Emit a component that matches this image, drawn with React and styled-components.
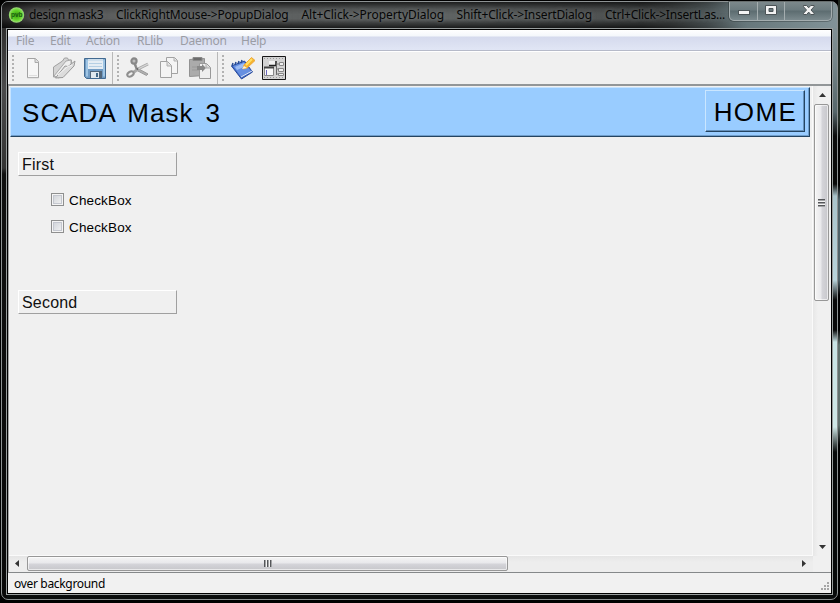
import React from "react";
import styled, { createGlobalStyle } from "styled-components";

const Global = createGlobalStyle`
  * { box-sizing: border-box; }
  body { margin: 0; background: #000; overflow: hidden; }
`;

const Desktop = styled.div`
  width: 840px;
  height: 603px;
  padding: 1px 2px 3px 1px;
  background: linear-gradient(180deg, #20271f 0 20px, #263028 120px, #000 140px 185px, #50646a 200px 280px, #000 295px 330px, #61736f 345px 425px, #000 445px) right 0 top 0 / 2px 100% no-repeat, #000;
  font-family: "Noto Sans", "Open Sans", sans-serif;
`;

const Frame = styled.div`
  display: flex;
  flex-direction: column;
  width: 837px;
  height: 599px;
  padding: 0 4px 4px;
  border: 1px solid #8d9293;
  border-radius: 7px;
  background:
    linear-gradient(180deg, #8a999d 0, #758589 60px, #56666a 110px, #0b0c0c 134px, #080909 182px, #a9c4cb 194px, #b9d5dc 278px, #080909 298px 328px, #c9e5e7 340px, #cfe8e7 425px, #070a0a 450px) right 0 top 0 / 5px 100% no-repeat,
    linear-gradient(180deg, #222 0, #4c4c4c 85px, #333 166px, #101010 172px, #080808) left 0 top 0 / 5px 100% no-repeat,
    #0a0d0d;
`;

const TitleBar = styled.header`
  position: relative;
  isolation: isolate;
  display: flex;
  flex: 0 0 26px;
  margin: 0 -4px;
  padding-left: 6px;
  border-radius: 6px 6px 0 0;
  background: linear-gradient(90deg, #242424 0, #4d4d4d 35px, #5c5e5e 110px, #5e6262 450px, #505353 590px, #454949 670px, #4e5759 705px, #66767a 740px, #829398 100%);
  &::before {
    content: "";
    position: absolute;
    inset: 0;
    z-index: -1;
    border-radius: inherit;
    background: linear-gradient(180deg, rgba(0,0,0,.7) 0, rgba(0,0,0,.12) 7px, rgba(0,0,0,0) 12px 17px, rgba(0,0,0,.35) 21px, rgba(0,0,0,.72) 26px);
    mask-image: linear-gradient(90deg, #000 640px, transparent 745px);
  }
`;

const AppIcon = styled.svg`
  flex: 0 0 18px;
  width: 18px;
  height: 18px;
  margin-top: 4px;
`;

const Caption = styled.div`
  display: grid;
  grid-template-columns: 87px 185.5px 155px 148.5px 124px;
  flex: 0 0 700px;
  margin: 4px 0 0 3px;
  font-size: 12px;
  line-height: 18px;
  color: #060606;
  white-space: nowrap;
  text-shadow: 0 0 4px rgba(130,135,135,.5);
`;

const CaptionPart = styled.span`
  letter-spacing: ${(p) => p.$track || 0}px;
`;

const WindowButtons = styled.div`
  display: grid;
  grid-template-columns: 28px 27px 46px;
  width: 103px;
  height: 19px;
  border: 1px solid #a4adaf;
  border-top: 0;
  border-radius: 0 0 5px 5px;
  background: linear-gradient(180deg, #7c888b, #6b7a7e 45%, #5c6c70 50%, #7b898d);
  box-shadow: 0 0 0 1px rgba(20,25,26,.3);
`;

const WindowButton = styled.div`
  display: flex;
  border-right: 1px solid #a4adaf;
  &:last-child { border: 0; }
`;

const Client = styled.main`
  display: flex;
  flex-direction: column;
  width: 827px;
  height: 567px;
  border: 1px solid #999e9e;
  background: #000;
  padding: 1px;
`;

const MenuBar = styled.nav`
  display: grid;
  grid-template-columns: 34px 36px 51px 43px 61px 40px;
  flex: 0 0 21px;
  height: 21px;
  padding-left: 8px;
  border-bottom: 1px solid #b6bac9;
  background: linear-gradient(180deg, #fff 0, #f4f7fb 6px, #d5daed 7px, #e1e6f5 20px);
  color: #9b9da5;
  font-size: 12px;
  line-height: 22px;
  letter-spacing: -.25px;
`;

const ToolBar = styled.div`
  display: flex;
  flex: 0 0 35px;
  border-top: 1px solid #fff;
  border-bottom: 2px solid #929698;
  background: #f0f0f0;
`;

const ToolGroup = styled.div`
  display: flex;
  align-items: center;
  width: ${(p) => p.$width}px;
  height: 32px;
  padding-left: 4px;
  border-right: ${(p) => (p.$last ? "0" : "1px solid #b8b8b8")};
`;

const Grip = styled.i`
  flex: 0 0 2px;
  height: 27px;
  margin-right: 6px;
  background: repeating-linear-gradient(180deg, #b2b2b2 0 2px, transparent 2px 4px);
`;

const Tool = styled.svg`
  flex: 0 0 26px;
  width: 26px;
  height: 26px;
  margin-right: ${(p) => p.$gap ?? 5}px;
`;

const Workspace = styled.section`
  display: grid;
  grid-template: 470px 16px / 804px 18px;
  flex: 0 0 487px;
  border-left: 1px solid #a3a3a3;
  border-bottom: 1px solid #85888a;
  background: #f0f0f0;
`;

const Canvas = styled.div`
  padding: 1px 0 0 1px;
  border-right: 1px solid #fafafa;
  border-bottom: 1px solid #fafafa;
`;

const Banner = styled.div`
  display: flex;
  justify-content: space-between;
  width: 800px;
  height: 50px;
  padding: 2px 4px 0 10px;
  border: 1px solid;
  border-color: #c5e3ff #244461 #244461 #c5e3ff;
  background: #99ccff;
  box-shadow: inset -1px -1px #6f9dca;
`;

const BannerTitle = styled.h1`
  margin: 7px 0 0 1px;
  color: #000;
  font: 400 26px/32px "Liberation Sans", Arial, sans-serif;
  letter-spacing: 1.05px;
  word-spacing: 3.6px;
  white-space: nowrap;
`;

const HomeButton = styled.button`
  width: 100px;
  height: 42px;
  padding: 2px 0 0 1px;
  border: 1px solid;
  border-color: #cae6ff #244461 #244461 #cae6ff;
  background: #99ccff;
  box-shadow: inset -1px -1px #6490bb;
  color: #000;
  font: 400 26px/38px "Liberation Sans", Arial, sans-serif;
  letter-spacing: 1.4px;
  text-align: center;
  white-space: nowrap;
`;

const SectionLabel = styled.h2`
  width: 159px;
  height: 24px;
  margin: ${(p) => p.$top}px 0 0 8px;
  padding-left: 3px;
  border: 1px solid;
  border-color: #fff #a0a0a0 #a0a0a0 #fff;
  color: #111;
  font: 400 16px/24px "Liberation Sans", Arial, sans-serif;
  letter-spacing: .2px;
`;

const CheckList = styled.div`
  display: grid;
  grid-template-rows: 27px 27px;
  margin: 10px 0 0 41px;
`;

const Check = styled.label`
  display: flex;
  align-items: center;
  gap: 5px;
  color: #000;
  font: 400 13.5px/20px "Liberation Sans", Arial, sans-serif;
  letter-spacing: .15px;
`;

const CheckText = styled.span`
  padding-top: 2px;
`;

const CheckMark = styled.i`
  width: 13px;
  height: 13px;
  border: 1px solid #8e8f8f;
  background: linear-gradient(135deg, #cbcfd5, #f6f6f6);
  box-shadow: inset 0 0 0 1px #f4f4f4, inset 0 0 0 2px #c4c7cf;
`;

const VScroll = styled.div`
  display: grid;
  grid-template-rows: 18px 197px 1fr 17px;
  justify-items: center;
  padding: 0 1px;
  background: linear-gradient(90deg, #e7e7e7, #f0f0f0 5px);
`;

const HScroll = styled.div`
  display: grid;
  grid-template-columns: 18px 481px 1fr 17px;
  align-items: start;
  background: linear-gradient(180deg, #e5e5e5, #ededed 6px);
`;

const Thumb = styled.div`
  display: flex;
  align-items: center;
  justify-content: center;
  width: ${(p) => (p.$vertical ? "15px" : "481px")};
  height: ${(p) => (p.$vertical ? "197px" : "15px")};
  justify-self: start;
  border: 1px solid #979797;
  border-radius: 2px;
  background: linear-gradient(${(p) => (p.$vertical ? "90deg" : "180deg")}, #f5f5f5 0, #e8e8eb 48%, #d5d5da 52%, #c7c7cb 100%);
  box-shadow: inset 0 0 0 1px rgba(255,255,255,.6);
`;

const ThumbGrip = styled.i`
  width: ${(p) => (p.$vertical ? 7 : 8)}px;
  height: ${(p) => (p.$vertical ? 8 : 7)}px;
  background: repeating-linear-gradient(${(p) => (p.$vertical ? "180deg" : "90deg")}, #55575a 0 1px, #a2a3a5 1px 2px, #f4f4f4 2px 3px);
`;

const Arrow = styled.svg`
  width: 15px;
  height: 15px;
  fill: #333;
`;

const StatusBar = styled.footer`
  display: flex;
  justify-content: space-between;
  flex: 0 0 20px;
  height: 20px;
  padding-left: 6px;
  background: #f1f1f1;
  color: #000;
  font-size: 12px;
  line-height: 22px;
  letter-spacing: -.32px;
`;

const ResizeGrip = styled.svg`
  width: 10px;
  height: 10px;
  margin: 9px 1px 0 0;
  fill: #a6a6a6;
`;

const captions = [
  ["design mask3", -0.3],
  ["ClickRightMouse->PopupDialog", -0.18],
  ["Alt+Click->PropertyDialog", -0.05],
  ["Shift+Click->InsertDialog", -0.13],
  ["Ctrl+Click->InsertLas...", -0.22],
];

const Glyphs = () => (
  <WindowButtons>
    <WindowButton>
      <svg width="27" height="18"><rect x="8.5" y="8.5" width="11" height="4" fill="#f2f2f2" stroke="#4c5457" /></svg>
    </WindowButton>
    <WindowButton>
      <svg width="26" height="18"><path d="M7.5 3.5h11v9h-11z M11 6.5h4v3h-4z" fill="#f2f2f2" fillRule="evenodd" stroke="#4c5457" /></svg>
    </WindowButton>
    <WindowButton>
      <svg width="45" height="18"><path d="M18.5 3.5h3.2l2 2.3 2-2.3H29v1.2L26 8l3 3.3v1.2h-3.3l-2-2.4-2 2.4h-3.2v-1.2l3-3.3-3-3.3z" fill="#f2f2f2" stroke="#4c5457" /></svg>
    </WindowButton>
  </WindowButtons>
);

const NewIcon = () => (
  <Tool viewBox="0 0 26 26">
    <path d="M7.5 3.5h8l3 3.2v16h-11z" fill="#f6f6f6" stroke="#a2a2a2" />
    <path d="M15 3.5v4h3.7" fill="#ddd" stroke="#aaa" />
    <path d="M9 20.5h8" stroke="#dedede" />
  </Tool>
);

const OpenIcon = () => (
  <Tool viewBox="0 0 26 26">
    <path d="M2.5 22V12l9-6 2-3h3l1 2h3v4L10 22z" fill="#d4d4d4" stroke="#a0a0a0" />
    <path d="M3 21 15 6l5-1v4L8 23z" fill="#eee" stroke="#aaa" />
    <path d="M4.5 23 14 11l3 .5L24 6l-1 5L12 22.5z" fill="#dcdcdc" stroke="#999" />
    <path d="m7 20 9-8 5-2" stroke="#f3f3f3" fill="none" />
  </Tool>
);

const SaveIcon = () => (
  <Tool viewBox="0 0 26 26" $gap={0}>
    <path d="M2.5 3.5h21v20h-19l-2-2z" fill="#719bc3" stroke="#426a91" />
    <path d="M4 4.5h2v17H4zM21 4.5h2v17h-2z" fill="#9fc5e4" />
    <path d="M6 4h15v10H6z" fill="#e5edf4" />
    <path d="M6 5h15M7 8.5h13M7 11.5h13" stroke="#b5cfe4" />
    <path d="M8 16h12v7H8z" fill="#53677a" />
    <path d="M9 17h8v6H9z" fill="#e2e9ee" />
    <path d="M14 18h2v4h-2z" fill="#456987" />
  </Tool>
);

const CutIcon = () => (
  <Tool viewBox="0 0 26 26">
    <path d="m10 6 2 7 11 6-1.5 1.5L11 15" fill="#b0b0b0" stroke="#9a9a9a" />
    <path d="m23 9-10 5-4 3" stroke="#aaa" strokeWidth="3" fill="none" />
    <path d="m23 9-10 5" stroke="#d8d8d8" strokeWidth="1.2" />
    <circle cx="9" cy="6" r="2.6" fill="#bcbcbc" stroke="#888" strokeWidth="2.1" />
    <path d="m9.5 9 2 5" stroke="#888" strokeWidth="2" />
    <ellipse cx="5.5" cy="19" rx="3.4" ry="2.3" fill="#eee" stroke="#8f8f8f" strokeWidth="2.1" transform="rotate(-30 5.5 19)" />
    <circle cx="12.5" cy="14" r="1" fill="#666" />
  </Tool>
);

const CopyIcon = () => (
  <Tool viewBox="0 0 26 26">
    <path d="M10.5 2.5h8l3 3v13h-11zM4.5 6.5h7l4 4v12h-11z" fill="#f4f4f4" stroke="#a2a2a2" />
    <path d="M5 7h6l4 4v11H5z" fill="#f4f4f4" />
    <path d="M18 3v3h3M11 7v4h4" fill="#ddd" stroke="#b0b0b0" />
  </Tool>
);

const PasteIcon = () => (
  <Tool viewBox="0 0 26 26" $gap={0}>
    <path d="m2.5 4.5 15-1v17l-15 1z" fill="#ababab" stroke="#929292" />
    <path d="M6 2.5h9v3H6z" fill="#6c6c6c" stroke="#888" />
    <path d="M12.5 8.5h7l4 4v11h-11z" fill="#eee" stroke="#999" />
    <path d="M5 12h7M5 15h7" stroke="#999" />
    <path d="M10 11h5v-2l4 4-4 4v-2h-5z" fill="#888" />
    <path d="M19 9v4h4" fill="#d6d6d6" stroke="#aaa" />
  </Tool>
);

const NotesIcon = () => (
  <Tool viewBox="0 0 26 26">
    <path d="m1.5 11 13-5 8 11-11 7z" fill="#3965c4" stroke="#28499a" />
    <path d="m3 11 11-4 7 9-10 6z" fill="#668fe0" />
    <path d="m5 12 9-4 2 3-9 4z" fill="#9cbcf3" />
    <path d="m11 22 11-6" stroke="#e3eaf7" />
    <path d="m2 11 1-3M5 10l1-3M8 9l1-3M11 8l1-3" stroke="#294d95" strokeWidth="1.5" />
    <path d="m13 14 1-4L21.5 2.5l3.5 3L17 13z" fill="#f6b42d" stroke="#eda636" />
    <path d="m16 10 6-6" stroke="#ffdf67" strokeWidth="2" />
    <path d="m12 14 2-3 3 2z" fill="#f2eee1" />
  </Tool>
);

const LayoutIcon = () => (
  <Tool viewBox="0 0 26 26">
    <path d="M1.5 1.5h23v23h-23z" fill="#d3d3d3" stroke="#161616" />
    <path d="M3 3.5h20M3 22.5h20" stroke="#999" strokeDasharray="1 2" />
    <path d="M8 6h6v4H8z" fill="#f2f2f2" />
    <path d="M8 10.5h7V6" fill="none" stroke="#222" strokeWidth="1.5" />
    <path d="M15.5 10v10" fill="none" stroke="#666" />
    <path d="M3.5 12.5h9v8h-9z" fill="#f9f9f9" stroke="#888" />
    <path d="M3 12.5h10" stroke="#444" strokeWidth="2" />
    <path d="M5.5 15v5" stroke="#6b68bd" />
    <path d="M18.5 7.5h4v3h-4zM17.5 13.5h5v3h-5zM17.5 18.5h5v2h-5z" fill="#eee" stroke="#888" />
    <path d="M15 9h3M15 14h3M15 19h3" stroke="#777" />
  </Tool>
);

const Triangle = ({ d }) => <Arrow viewBox="0 0 15 15"><path d={d} /></Arrow>;

export default function App() {
  return (
    <Desktop>
      <Global />
      <Frame>
        <TitleBar>
          <AppIcon viewBox="0 0 18 18">
            <defs><radialGradient id="logo"><stop stopColor="#3a9b0c" /><stop offset=".65" stopColor="#64d52a" /><stop offset="1" stopColor="#a1dd7e" /></radialGradient></defs>
            <circle cx="8.5" cy="9" r="7.7" fill="url(#logo)" />
            <text x="3" y="11" fontFamily="Liberation Sans" fontSize="6.5" fontWeight="700" fill="#185b12">pvb</text>
          </AppIcon>
          <Caption>{captions.map(([text, track]) => <CaptionPart key={text} $track={track}>{text}</CaptionPart>)}</Caption>
          <Glyphs />
        </TitleBar>
        <Client>
          <MenuBar>{["File", "Edit", "Action", "RLlib", "Daemon", "Help"].map((name) => <span key={name}>{name}</span>)}</MenuBar>
          <ToolBar>
            <ToolGroup $width={105}><Grip /><NewIcon /><OpenIcon /><SaveIcon /></ToolGroup>
            <ToolGroup $width={105}><Grip /><CutIcon /><CopyIcon /><PasteIcon /></ToolGroup>
            <ToolGroup $width={75} $last><Grip /><NotesIcon /><LayoutIcon /></ToolGroup>
          </ToolBar>
          <Workspace>
            <Canvas>
              <Banner><BannerTitle>SCADA Mask 3</BannerTitle><HomeButton>HOME</HomeButton></Banner>
              <SectionLabel $top={15}>First</SectionLabel>
              <CheckList>
                <Check><CheckMark /><CheckText>CheckBox</CheckText></Check>
                <Check><CheckMark /><CheckText>CheckBox</CheckText></Check>
              </CheckList>
              <SectionLabel $top={50}>Second</SectionLabel>
            </Canvas>
            <VScroll>
              <Triangle d="M4 11 7.5 7 11 11z" />
              <Thumb $vertical><ThumbGrip $vertical /></Thumb>
              <span />
              <Triangle d="M4 6 7.5 10 11 6z" />
            </VScroll>
            <HScroll>
              <Triangle d="M10 4 6 7.5 10 11z" />
              <Thumb><ThumbGrip /></Thumb>
              <span />
              <Triangle d="M6 4 10 7.5 6 11z" />
            </HScroll>
          </Workspace>
          <StatusBar>
            over background
            <ResizeGrip viewBox="0 0 10 10"><path d="M7 0h2v2H7zM4 3h2v2H4zM7 3h2v2H7zM1 6h2v2H1zM4 6h2v2H4zM7 6h2v2H7z" /></ResizeGrip>
          </StatusBar>
        </Client>
      </Frame>
    </Desktop>
  );
}
